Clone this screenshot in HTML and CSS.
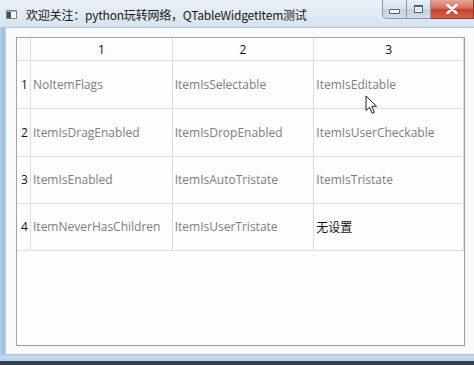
FILE: index.html
```html
<!DOCTYPE html>
<html>
<head>
<meta charset="utf-8">
<link rel="stylesheet" href="styles.css">
</head>
<body>
<div class="window">
  <div class="titlebar">
    <svg class="app-icon" width="11" height="9" viewBox="0 0 11 9">
      <rect x="0.5" y="0.5" width="10" height="8" fill="#fdfdfd" stroke="#7d8a96"/>
      <rect x="1" y="2" width="4" height="6" fill="#3d5a3a"/>
      <rect x="1" y="1" width="9" height="1" fill="#9fb0c0"/>
    </svg>
    <span class="title">欢迎关注：python玩转网络，QTableWidgetItem测试</span>
    <div class="controls">
      <div class="btn min"><span class="min-bar"></span></div>
      <div class="btn max"><span class="max-box"></span></div>
      <div class="btn close">
        <svg width="12" height="10" viewBox="0 0 12 10"><path d="M1.5 1 L10.5 9 M10.5 1 L1.5 9" stroke="#fff" stroke-width="2.4" stroke-linecap="round"/></svg>
      </div>
    </div>
  </div>
  <div class="side-left"></div>
  <div class="client">
    <div class="table">
      <div class="corner"></div>
      <div class="hh">1</div>
      <div class="hh">2</div>
      <div class="hh">3</div>

      <div class="vh">1</div>
      <div class="cell">NoItemFlags</div>
      <div class="cell">ItemIsSelectable</div>
      <div class="cell">ItemIsEditable</div>

      <div class="vh">2</div>
      <div class="cell">ItemIsDragEnabled</div>
      <div class="cell">ItemIsDropEnabled</div>
      <div class="cell">ItemIsUserCheckable</div>

      <div class="vh">3</div>
      <div class="cell">ItemIsEnabled</div>
      <div class="cell">ItemIsAutoTristate</div>
      <div class="cell">ItemIsTristate</div>

      <div class="vh">4</div>
      <div class="cell">ItemNeverHasChildren</div>
      <div class="cell">ItemIsUserTristate</div>
      <div class="cell dark">无设置</div>
    </div>
  </div>
  <div class="bottom-border"></div>
</div>
<svg class="cursor" width="14" height="20" viewBox="0 0 14 20">
  <path d="M1 1 L1 15.5 L4.5 12.2 L7.2 18.3 L9.4 17.3 L6.8 11.3 L11.6 11.3 Z" fill="#fff" stroke="#222" stroke-width="1" stroke-linejoin="round"/>
</svg>
</body>
</html>
```
FILE: styles.css
```css
html, body {
  margin: 0;
  padding: 0;
}
body {
  width: 474px;
  height: 365px;
  overflow: hidden;
  background: #38414d;
  position: relative;
  font-family: "Open Sans", "Noto Sans CJK SC", sans-serif;
}
.window {
  width: 474px;
  height: 361px;
  display: grid;
  grid-template-columns: 6px 1fr;
  grid-template-rows: 27px 1fr 7px;
  background: #c9dbee;
}
.titlebar {
  grid-column: 1 / 3;
  display: flex;
  align-items: center;
  background: linear-gradient(to bottom, #e9f0f8 0%, #dfe9f4 60%, #d6e3f1 100%);
  position: relative;
}
.app-icon {
  margin-left: 6px;
  margin-top: 1px;
}
.title {
  margin-left: 9px;
  margin-top: 2px;
  font-family: "Noto Sans CJK SC", sans-serif;
  font-size: 12px;
  color: #1a1a1a;
  letter-spacing: -0.2px;
}
.controls {
  position: absolute;
  top: 0;
  left: 382px;
  display: flex;
  height: 19px;
}
.btn {
  height: 18px;
  display: flex;
  align-items: center;
  justify-content: center;
  border: 1px solid #8799ad;
  border-top: none;
  box-sizing: border-box;
  height: 19px;
}
.min {
  width: 25px;
  border-radius: 0 0 0 5px;
  background: linear-gradient(to bottom, #e8eef5 0%, #d7e1ec 50%, #c3d1e0 51%, #d2deea 100%);
}
.max {
  width: 24px;
  border-left: none;
  background: linear-gradient(to bottom, #e8eef5 0%, #d7e1ec 50%, #c3d1e0 51%, #d2deea 100%);
}
.close {
  width: 43px;
  border-left: none;
  border-color: #8a3b30;
  background: linear-gradient(to bottom, #e7a696 0%, #d6705c 45%, #c3402b 55%, #d7664c 100%);
}
.min-bar {
  width: 9px;
  height: 3px;
  background: #fff;
  border: 1px solid #4f5f72;
  margin-top: 5px;
  border-radius: 1px;
}
.max-box {
  width: 7px;
  height: 5px;
  border: 1px solid #4f5f72;
  box-shadow: inset 0 0 0 1px #fff;
  border-top-width: 2px;
  background: #dfe6ef;
}
.side-left {
  background: linear-gradient(to right, #b6cde6, #9fbadb 60%, #c4d6ea);
}
.client {
  background: #fafafa;
  border-top: 1px solid #b3c0ce;
  padding: 9px 9px 8px 10px;
  box-sizing: border-box;
}
.bottom-border {
  grid-column: 1 / 3;
  background: linear-gradient(to bottom, #a7c3e2, #c6daef 40%, #b9d0ea);
}
.table {
  height: 100%;
  box-sizing: border-box;
  border: 1px solid #a3a3a3;
  border-right-color: #9a9a9a;
  border-bottom-color: #9a9a9a;
  background: #fdfdfd;
  display: grid;
  grid-template-columns: 14px 141.7px 141.6px 149.7px;
  grid-template-rows: 23px 48px 47.5px 47px 47px;
  align-content: start;
  font-size: 12px;
}
.corner {
  border-right: 1px solid #dedede;
  border-bottom: 1px solid #dedede;
  background: #fbfbfb;
}
.hh {
  border-right: 1px solid #dedede;
  border-bottom: 1px solid #dedede;
  display: flex;
  align-items: center;
  justify-content: center;
  color: #111;
  font-size: 12px;
  background: #fdfdfd;
}
.hh:nth-child(4) {
  border-right-color: #d8d8d8;
}
.vh {
  border-right: 1px solid #dedede;
  border-bottom: 1px solid #dedede;
  display: flex;
  align-items: center;
  padding-left: 4px;
  color: #111;
  font-size: 12px;
}
.cell {
  border-right: 1px solid #dcdcdc;
  border-bottom: 1px solid #dcdcdc;
  display: flex;
  align-items: center;
  padding-left: 2px;
  color: #7e7e7e;
  white-space: nowrap;
}
.cell.dark {
  color: #111;
  font-family: "Noto Sans CJK SC", sans-serif;
}
.cursor {
  position: absolute;
  left: 365px;
  top: 95px;
}
```
